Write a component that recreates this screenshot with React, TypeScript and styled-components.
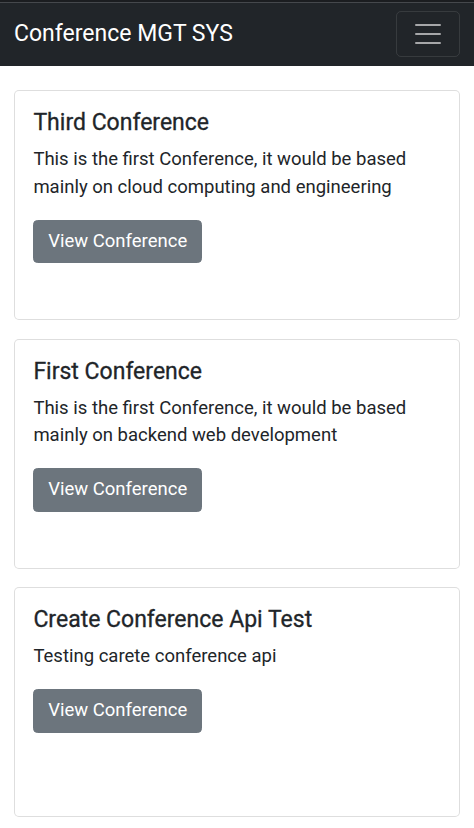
import styled, { createGlobalStyle } from "styled-components";

const GlobalStyle = createGlobalStyle`
  * {
    box-sizing: border-box;
  }

  body {
    margin: 0;
    background: #fff;
    color: #212529;
    font-family: Roboto, "Noto Sans", "Liberation Sans", sans-serif;
    font-size: 18.5px;
    line-height: 1.5;
  }
`;

const TopEdge = styled.div`
  height: 3px;
  background: #1b1d20;
  border-bottom: 1px solid #45484c;
`;

const Navbar = styled.nav`
  display: flex;
  align-items: center;
  justify-content: space-between;
  height: 63px;
  padding: 0 14px;
  background: #212529;
`;

const Brand = styled.a`
  color: #fff;
  font-size: 23px;
  line-height: 1.2;
  text-decoration: none;
  margin-top: -1px;
`;

const Toggler = styled.button`
  display: flex;
  flex-direction: column;
  justify-content: center;
  gap: 6.5px;
  width: 64px;
  height: 46px;
  padding: 0 18px;
  background: transparent;
  border: 1px solid rgba(255, 255, 255, 0.1);
  border-radius: 5px;
  margin-top: -1px;

  & span {
    display: block;
    height: 2.5px;
    background: rgba(255, 255, 255, 0.6);
    border-radius: 1px;
  }
`;

const Container = styled.main`
  display: flex;
  flex-direction: column;
  gap: 18.5px;
  padding: 24px 14px 18px;
`;

const Card = styled.article`
  height: 230px;
  padding: 18.4px;
  border: 1px solid rgba(0, 0, 0, 0.13);
  border-radius: 5px;
  background: #fff;
`;

const Title = styled.h5`
  margin: 0 0 9.2px;
  font-size: 23px;
  font-weight: 400;
  line-height: 1.2;
  -webkit-text-stroke: 0.3px #212529;
`;

const Text = styled.p`
  margin: 0 0 18.4px;
  line-height: 27.6px;
`;

const Button = styled.a`
  display: inline-block;
  padding: 6.9px 13.8px;
  border: 1px solid #6c757d;
  border-radius: 4.5px;
  background: #6c757d;
  color: #fff;
  line-height: 27.6px;
  text-decoration: none;
`;

const conferences = [
  {
    title: "Third Conference",
    text: "This is the first Conference, it would be based mainly on cloud computing and engineering",
  },
  {
    title: "First Conference",
    text: "This is the first Conference, it would be based mainly on backend web development",
  },
  {
    title: "Create Conference Api Test",
    text: "Testing carete conference api",
  },
];

function App() {
  return (
    <>
      <GlobalStyle />
      <TopEdge />
      <Navbar>
        <Brand href="#">Conference MGT SYS</Brand>
        <Toggler aria-label="Toggle navigation">
          <span />
          <span />
          <span />
        </Toggler>
      </Navbar>
      <Container>
        {conferences.map((c) => (
          <Card key={c.title}>
            <Title>{c.title}</Title>
            <Text>{c.text}</Text>
            <Button href="#">View Conference</Button>
          </Card>
        ))}
      </Container>
    </>
  );
}

export default App;
